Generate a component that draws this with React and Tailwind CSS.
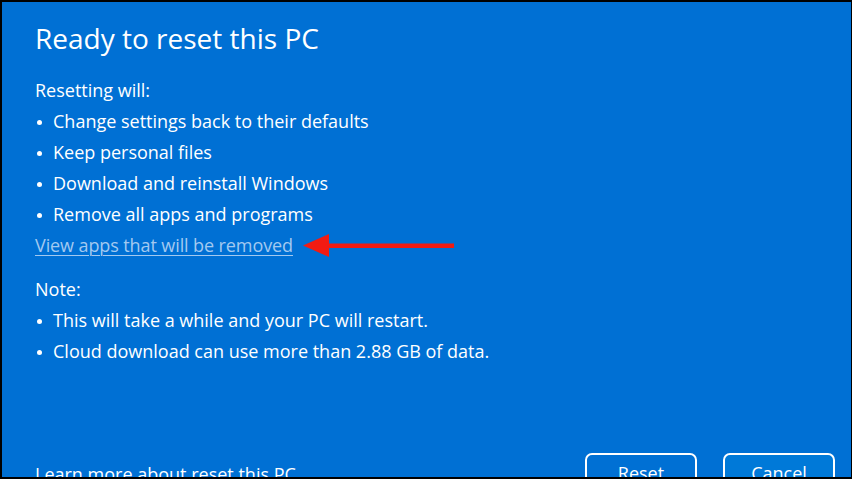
import React from 'react';

const RESETS = [
  'Change settings back to their defaults',
  'Keep personal files',
  'Download and reinstall Windows',
  'Remove all apps and programs'
];

const NOTES = [
  'This will take a while and your PC will restart.',
  'Cloud download can use more than 2.88 GB of data.'
];

function Bullets({ items }) {
  return (
    <ul>
      {items.map(t => (
        <li key={t} className="flex items-center leading-[31px]">
          <span className="w-[18px] pl-[2px]">
            <span className="block w-[5px] h-[5px] rounded-full bg-white mt-[2px]" />
          </span>
          <span>{t}</span>
        </li>
      ))}
    </ul>
  );
}

function Arrow() {
  return (
    <svg width="152" height="24" viewBox="0 0 152 24" className="ml-[10px] mt-[1px] shrink-0">
      <polygon points="0,11.5 26,0 26,23" fill="#f21b12" />
      <rect x="24" y="9.5" width="127" height="4.5" fill="#f21b12" />
    </svg>
  );
}

export default function App() {
  return (
    <div className="w-[852px] h-[479px] bg-black pt-[2px] pl-[2px] pr-[1px] pb-[2px]">
      <div className="h-full bg-[#0070d4] overflow-hidden pl-[33px] pr-[16px] pt-[18px] text-white text-[18px] font-['Open_Sans',sans-serif]">
        <h1 className="text-[28px] leading-[36px]">Ready to reset this PC</h1>

        <div className="mt-[19px] leading-[31px]">Resetting will:</div>
        <Bullets items={RESETS} />

        <div className="flex items-center leading-[31px]">
          <a className="text-[#a3c9f0] underline underline-offset-[3px] decoration-1 tracking-[-0.1px]">View apps that will be removed</a>
          <Arrow />
        </div>

        <div className="mt-[13px] leading-[31px]">Note:</div>
        <Bullets items={NOTES} />

        <div className="mt-[86px] flex items-start">
          <div className="mt-[6px] leading-[31px] flex-1">Learn more about reset this PC</div>
          <div className="flex gap-[26px]">
            <button className="w-[112px] h-[34px] rounded-[7px] border-2 border-white bg-[#0070d4] leading-[30px] pt-[3px]">Reset</button>
            <button className="w-[112px] h-[34px] rounded-[7px] border-2 border-white bg-[#0079d8] leading-[30px] pt-[3px]">Cancel</button>
          </div>
        </div>
      </div>
    </div>
  );
}
